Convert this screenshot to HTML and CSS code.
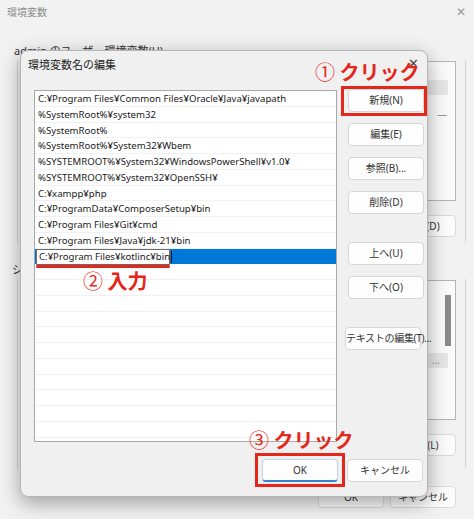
FILE: index.html
```html
<!DOCTYPE html>
<html lang="ja">
<head>
    <meta charset="UTF-8">
    <meta name="viewport" content="width=device-width, initial-scale=1.0">
    <title>環境変数名の編集</title>
    <link rel="stylesheet" href="styles.css">
</head>
<body>
    <div class="back">
        <div class="back-title">
            <span>環境変数</span>
            <span class="back-close">✕</span>
        </div>
        <div class="back-label">admin のユーザー環境変数(U)</div>
        <div class="back-panel">
            <div class="back-list">
                <div class="back-row"></div>
                <div class="back-row hl"></div>
                <div class="back-row dash">—</div>
            </div>
            <div class="back-btns">
                <div class="back-btn">削除(D)</div>
            </div>
        </div>
        <div class="back-label sys">システム環境変数(S)</div>
        <div class="back-panel second">
            <div class="back-list">
                <div class="back-row"></div>
                <div class="back-row"></div>
                <div class="back-row"></div>
                <div class="back-row"></div>
                <div class="back-row hl">...</div>
                <div class="scroll"></div>
            </div>
            <div class="back-btns">
                <div class="back-btn">削除(L)</div>
            </div>
        </div>
        <div class="back-foot">
            <div class="back-btn">OK</div>
            <div class="back-btn">キャンセル</div>
        </div>
    </div>

    <div class="dialog">
        <div class="dialog-title">
            <span>環境変数名の編集</span>
            <span class="close">✕</span>
        </div>
        <div class="dialog-body">
            <div class="listbox">
                <div class="row">C:¥Program Files¥Common Files¥Oracle¥Java¥javapath</div>
                <div class="row">%SystemRoot%¥system32</div>
                <div class="row">%SystemRoot%</div>
                <div class="row">%SystemRoot%¥System32¥Wbem</div>
                <div class="row">%SYSTEMROOT%¥System32¥WindowsPowerShell¥v1.0¥</div>
                <div class="row">%SYSTEMROOT%¥System32¥OpenSSH¥</div>
                <div class="row">C:¥xampp¥php</div>
                <div class="row">C:¥ProgramData¥ComposerSetup¥bin</div>
                <div class="row">C:¥Program Files¥Git¥cmd</div>
                <div class="row">C:¥Program Files¥Java¥jdk-21¥bin</div>
                <div class="row sel"><div class="edit">C:¥Program Files¥kotlinc¥bin<span class="caret"></span></div></div>
                <div class="row"></div>
                <div class="row"></div>
                <div class="row"></div>
                <div class="row"></div>
                <div class="row"></div>
                <div class="row"></div>
                <div class="row"></div>
                <div class="row"></div>
                <div class="row"></div>
                <div class="row"></div>
                <div class="row"></div>
            </div>
            <div class="btns">
                <div class="btn">新規(N)</div>
                <div class="btn">編集(E)</div>
                <div class="btn">参照(B)...</div>
                <div class="btn">削除(D)</div>
                <div class="btn spaced">上へ(U)</div>
                <div class="btn">下へ(O)</div>
                <div class="btn spaced wide">テキストの編集(T)...</div>
            </div>
        </div>
        <div class="dialog-foot">
            <div class="btn default">OK</div>
            <div class="btn">キャンセル</div>
        </div>
    </div>

    <!-- annotations -->
    <div class="note n1"><span class="num">①</span> クリック</div>
    <div class="frame f1"></div>
    <div class="underline"></div>
    <div class="note n2"><span class="num">②</span> 入力</div>
    <div class="note n3"><span class="num">③</span> クリック</div>
    <div class="frame f2"></div>
</body>
</html>
```

FILE: styles.css
```css
body{
    margin:0;
    font-family: "Noto Sans", "Noto Sans CJK JP", sans-serif;
    position:relative;
    width:474px;
    height:519px;
    overflow:hidden;
}

/* window behind */
.back{
    width:474px;
    height:519px;
    background:#f2f2f2;
    display:flex;
    flex-direction:column;
    font-size:10px;
    color:#333;
}
.back-title{
    height:22px;
    padding:0 8px 0 7px;
    display:flex;
    align-items:center;
    justify-content:space-between;
    color:#8c8c8c;
}
.back-close{
    font-size:12px;
    color:#999;
}
.back-label{
    margin:20px 0 0 14px;
    font-size:11px;
    height:14px;
}
.back-label.sys{
    margin:18px 0 0 12px;
}
.back-panel{
    margin:4px 8px 0 17px;
    height:183px;
    border-left:1px solid #d4d4d4;
    border-right:1px solid #d4d4d4;
    display:flex;
    flex-direction:column;
    align-items:flex-end;
    padding:1px 9px 0 0;
    box-sizing:border-box;
}
.back-panel.second{
    height:189px;
}
.back-list{
    width:120px;
    height:140px;
    background:#fafafa;
    border:1px solid #b5b5b5;
    position:relative;
    box-sizing:border-box;
}
.back-row{
    height:18px;
    padding-left:90px;
    color:#999;
}
.back-row.hl{
    background:#e6e6e6;
    width:16px;
    margin-left:90px;
    padding-left:5px;
    height:15px;
}
.back-row.dash{
    padding-left:100px;
    line-height:38px;
}
.scroll{
    position:absolute;
    right:4px;
    top:14px;
    width:6px;
    height:51px;
    background:#8a8a8a;
}
.back-btns{
    margin-top:14px;
}
.back-btn{
    width:64px;
    height:20px;
    line-height:20px;
    text-align:center;
    background:#fbfbfb;
    border:1px solid #dadada;
    border-radius:4px;
}
.back-foot{
    display:flex;
    justify-content:flex-end;
    gap:6px;
    margin:18px 18px 0 0;
}

/* front dialog */
.dialog{
    position:absolute;
    left:20px;
    top:50px;
    width:408px;
    height:447px;
    box-sizing:border-box;
    border:1px solid #b5b5b5;
    border-radius:8px;
    background:#f0f0f0;
    box-shadow:0 6px 20px rgba(0,0,0,0.35);
    display:flex;
    flex-direction:column;
}
.dialog-title{
    height:21px;
    padding:0 8px 0 7px;
    display:flex;
    align-items:flex-end;
    justify-content:space-between;
    font-size:11px;
    color:#222;
}
.close{
    font-size:13px;
    color:#444;
}
.dialog-body{
    display:flex;
    padding:18px 0 0 13px;
    gap:11px;
}
.listbox{
    width:303px;
    height:352px;
    box-sizing:border-box;
    border:1px solid #a8a8a8;
    background:#fff;
    overflow:hidden;
}
.row{
    height:15.75px;
    box-sizing:border-box;
    border-bottom:1px solid #f1f1f1;
    padding-left:3px;
    font-size:9.6px;
    line-height:15px;
    color:#1a1a1a;
    white-space:nowrap;
}
.row.sel{
    background:#0078d7;
    padding-left:1px;
    border-bottom:0;
}
.edit{
    width:134px;
    height:16px;
    box-sizing:border-box;
    background:#fff;
    border:1px solid #6b6b6b;
    padding-left:2px;
    line-height:14px;
}
.caret{
    display:inline-block;
    width:1px;
    height:12px;
    background:#000;
    vertical-align:middle;
    margin-left:1px;
}
.btns{
    display:flex;
    flex-direction:column;
    gap:11px;
    width:76px;
    margin-top:-1px;
}
.btn{
    width:76px;
    height:23px;
    box-sizing:border-box;
    line-height:21px;
    text-align:center;
    font-size:10px;
    color:#333;
    background:#fdfdfd;
    border:1px solid #d6d6d6;
    border-radius:4px;
    white-space:nowrap;
}
.btn.spaced{
    margin-top:17px;
}
.btn.wide{
    margin-left:-3px;
    letter-spacing:-0.3px;
}
.btn.default{
    border-color:#c4d3e8 #c4d3e8 #3f7fd1;
    border-bottom-width:2px;
}
.dialog-foot{
    margin-top:auto;
    display:flex;
    justify-content:flex-end;
    gap:9px;
    padding:0 4px 14px 0;
}

/* red annotations */
.note{
    position:absolute;
    color:#e4261b;
    font-family:"Noto Sans CJK JP", sans-serif;
    font-weight:bold;
    font-size:20px;
    line-height:22px;
    white-space:nowrap;
}
.note .num{
    font-weight:normal;
}
.n1{ left:315px; top:61px; }
.n2{ left:83px; top:270px; }
.n3{ left:249px; top:429px; }
.frame{
    position:absolute;
    border:3px solid #e4261b;
    box-sizing:border-box;
}
.f1{ left:341px; top:86px; width:86px; height:30px; }
.f2{ left:255px; top:453px; width:90px; height:34px; }
.underline{
    position:absolute;
    left:36px;
    top:265px;
    width:134px;
    height:3px;
    background:#e4261b;
    border-radius:2px;
}
```
